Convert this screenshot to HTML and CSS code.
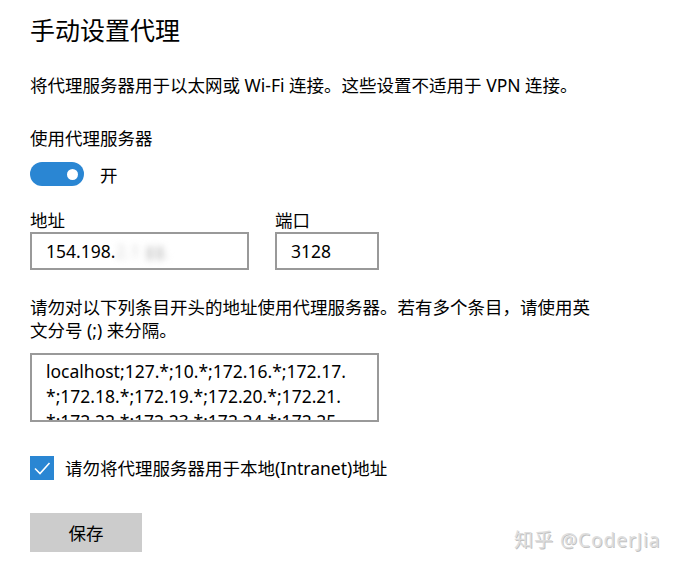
FILE: index.html
```html
<!DOCTYPE html>
<html lang="zh-CN">
<head>
  <meta charset="UTF-8">
  <meta name="viewport" content="width=device-width, initial-scale=1">
  <title>手动设置代理</title>
  <link rel="stylesheet" href="styles.css">
</head>
<body>

<div class="page">
  <h1 class="title">手动设置代理</h1>

  <p class="desc">将代理服务器用于以太网或 Wi-Fi 连接。这些设置不适用于 VPN 连接。</p>

  <div class="label use-proxy">使用代理服务器</div>
  <div class="toggle-row">
    <div class="toggle"><span class="knob"></span></div>
    <span class="toggle-text">开</span>
  </div>

  <div class="fields">
    <div class="field">
      <div class="label">地址</div>
      <div class="input addr">154.198.<span class="blur">2.1 ▮▮.</span></div>
    </div>
    <div class="field">
      <div class="label">端口</div>
      <div class="input port">3128</div>
    </div>
  </div>

  <p class="hint">请勿对以下列条目开头的地址使用代理服务器。若有多个条目，请使用英文分号 (;) 来分隔。</p>

  <textarea class="exceptions" readonly>localhost;127.*;10.*;172.16.*;172.17.
*;172.18.*;172.19.*;172.20.*;172.21.
*;172.22.*;172.23.*;172.24.*;172.25.</textarea>

  <label class="check-row">
    <span class="checkbox">
      <svg width="24" height="24" viewBox="0 0 24 24"><polyline points="5,12.5 10,17.5 19.5,7" fill="none" stroke="#fff" stroke-width="1.6"/></svg>
    </span>
    <span>请勿将代理服务器用于本地(Intranet)地址</span>
  </label>

  <button class="save">保存</button>
</div>

<div class="watermark">知乎 @CoderJia</div>

</body>
</html>
```

FILE: styles.css
```css
body {
  margin: 0;
  background: #fff;
  color: #000;
  font-family: "Noto Sans", "Noto Sans CJK SC", sans-serif;
  font-size: 17.5px;
}
.page {
  padding: 13px 0 0 30px;
}
.title {
  margin: 0;
  font-size: 25px;
  font-weight: normal;
  line-height: 34px;
}
.desc {
  margin: 26px 0 0;
  line-height: 24px;
}
.label {
  line-height: 24px;
}
.use-proxy {
  margin-top: 29px;
}
.toggle-row {
  display: flex;
  align-items: center;
  gap: 16px;
  margin-top: 12px;
  height: 24px;
}
.toggle {
  width: 54px;
  height: 24px;
  border-radius: 12px;
  background: #2a86d3;
  display: flex;
  align-items: center;
  justify-content: flex-end;
  padding: 0 6px;
  box-sizing: border-box;
}
.knob {
  width: 11px;
  height: 11px;
  border-radius: 50%;
  background: #fff;
}
.fields {
  display: flex;
  gap: 26px;
  margin-top: 22px;
}
.input {
  height: 38px;
  box-sizing: border-box;
  border: 2px solid #999;
  padding: 0 14px;
  line-height: 34px;
  white-space: nowrap;
  overflow: hidden;
}
.addr {
  width: 219px;
}
.port {
  width: 104px;
}
.blur {
  color: #d8d8d8;
  filter: blur(3px);
}
.hint {
  margin: 26px 0 0;
  width: 570px;
  line-height: 23px;
}
.exceptions {
  display: block;
  margin-top: 11px;
  width: 349px;
  height: 69px;
  box-sizing: border-box;
  border: 2px solid #999;
  padding: 4px 14px 0;
  font: inherit;
  line-height: 25px;
  color: #000;
  resize: none;
  overflow: hidden;
  outline: none;
}
.check-row {
  display: flex;
  align-items: center;
  gap: 11px;
  margin-top: 34px;
  line-height: 24px;
}
.checkbox {
  width: 24px;
  height: 24px;
  background: #2a86d3;
  display: flex;
}
.save {
  display: block;
  margin-top: 33px;
  width: 112px;
  height: 39px;
  border: none;
  background: #ccc;
  font: inherit;
  color: #000;
}
.watermark {
  position: absolute;
  left: 514px;
  top: 527px;
  font-size: 19px;
  line-height: 26px;
  color: #dedede;
  text-shadow: 1px 1px 0 #c2c2c2;
  letter-spacing: 1px;
}
```
